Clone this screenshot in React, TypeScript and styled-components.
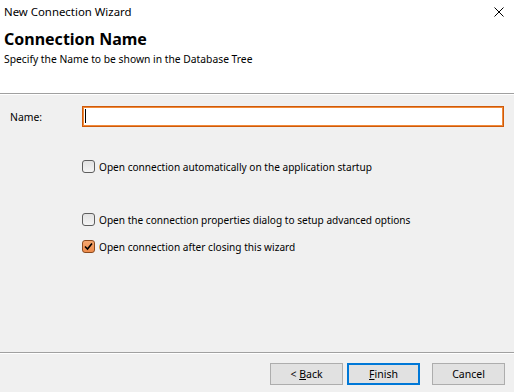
import React from 'react';
import styled, { createGlobalStyle } from 'styled-components';

const GlobalStyle = createGlobalStyle`
  html, body {
    margin: 0;
    padding: 0;
    background: #f0f0f0;
  }
  body {
    font-family: "Segoe UI", "Noto Sans", "Open Sans", sans-serif;
    color: #000;
  }
`;

const Dialog = styled.div`
  width: 514px;
  height: 392px;
  display: flex;
  flex-direction: column;
  background: #f0f0f0;
  overflow: hidden;
`;

const Header = styled.div`
  height: 93px;
  background: #fff;
  display: flex;
  flex-direction: column;
  padding-left: 4px;
  box-sizing: border-box;
`;

const TitleBar = styled.div`
  height: 24px;
  display: flex;
  align-items: center;
  justify-content: space-between;
  padding-right: 10px;
`;

const TitleText = styled.span`
  font-size: 11.4px;
  line-height: 24px;
`;

const CloseIcon = styled.svg`
  width: 10px;
  height: 10px;
  display: block;
`;

const Heading = styled.h1`
  margin: 5px 0 0;
  font-size: 16px;
  font-weight: 700;
  line-height: 20px;
`;

const Subtitle = styled.div`
  margin-top: 3px;
  font-size: 10.3px;
  line-height: 14px;
`;

const Separator = styled.div`
  height: 1px;
  background: #a0a0a0;
  border-bottom: 1px solid #fff;
`;

const Content = styled.div`
  flex: 1;
  display: flex;
  flex-direction: column;
  padding: 11px 10px 0 10px;
`;

const FieldRow = styled.div`
  display: flex;
  align-items: center;
  height: 21px;
`;

const Label = styled.label`
  width: 72px;
  flex-shrink: 0;
  font-size: 10.4px;
`;

const FieldWrap = styled.div`
  position: relative;
  flex: 1;
  height: 21px;
`;

const TextInput = styled.input`
  box-sizing: border-box;
  display: block;
  width: 100%;
  height: 21px;
  margin: 0;
  padding: 0 3px;
  border: 1px solid #cf5a0a;
  box-shadow: inset 0 0 0 1px #f08a3a;
  background: #fff;
  outline: none;
  font: inherit;
  font-size: 11px;
`;

const Caret = styled.span`
  position: absolute;
  left: 3px;
  top: 3px;
  width: 1px;
  height: 14px;
  background: #000;
`;

const Options = styled.div<{ $top: number }>`
  display: flex;
  flex-direction: column;
  gap: 14px;
  margin-top: ${(p) => p.$top}px;
  padding-left: 72px;
`;

const CheckRow = styled.label`
  display: flex;
  align-items: center;
  gap: 4px;
  height: 13px;
  font-size: 10.1px;
  white-space: nowrap;
`;

const Box = styled.span<{ $checked?: boolean }>`
  box-sizing: border-box;
  flex-shrink: 0;
  width: 13px;
  height: 13px;
  border-radius: 3px;
  border: 1px solid ${(p) => (p.$checked ? '#8b4a1e' : '#5e5e5e')};
  background: ${(p) =>
    p.$checked
      ? 'linear-gradient(#f4a66e, #ee8c4c)'
      : 'linear-gradient(#e2e2e2, #f4f4f4)'};
  display: flex;
  align-items: center;
  justify-content: center;
`;

const Footer = styled.div`
  height: 38px;
  display: flex;
  align-items: flex-start;
  justify-content: flex-end;
  padding: 9px 9px 0 0;
  box-sizing: border-box;
`;

const Button = styled.button<{ $default?: boolean; $gap?: number }>`
  box-sizing: border-box;
  width: 73px;
  height: 22px;
  margin-left: ${(p) => p.$gap ?? 0}px;
  padding: 0;
  background: #e1e1e1;
  border: ${(p) => (p.$default ? '2px solid #0078d7' : '1px solid #adadad')};
  font: inherit;
  font-size: 10.5px;
  color: #000;
  u {
    text-decoration: underline;
  }
`;

function Check({ checked }: { checked?: boolean }) {
  return (
    <Box $checked={checked}>
      {checked && (
        <svg width="9" height="9" viewBox="0 0 9 9">
          <path d="M1 4.5 L3.5 7 L8 1.5" fill="none" stroke="#000" strokeWidth="1.6" />
        </svg>
      )}
    </Box>
  );
}

export default function App() {
  return (
    <>
      <GlobalStyle />
      <Dialog>
        <Header>
          <TitleBar>
            <TitleText>New Connection Wizard</TitleText>
            <CloseIcon viewBox="0 0 10 10">
              <path d="M0.5 0.5 L9.5 9.5 M9.5 0.5 L0.5 9.5" stroke="#000" strokeWidth="1" />
            </CloseIcon>
          </TitleBar>
          <Heading>Connection Name</Heading>
          <Subtitle>Specify the Name to be shown in the Database Tree</Subtitle>
        </Header>
        <Separator />
        <Content>
          <FieldRow>
            <Label>Name:</Label>
            <FieldWrap>
              <TextInput defaultValue="" />
              <Caret />
            </FieldWrap>
          </FieldRow>
          <Options $top={33}>
            <CheckRow>
              <Check />
              Open connection automatically on the application startup
            </CheckRow>
          </Options>
          <Options $top={40}>
            <CheckRow>
              <Check />
              Open the connection properties dialog to setup advanced options
            </CheckRow>
            <CheckRow>
              <Check checked />
              Open connection after closing this wizard
            </CheckRow>
          </Options>
        </Content>
        <Separator />
        <Footer>
          <Button>
            &lt; <u>B</u>ack
          </Button>
          <Button $default $gap={4}>
            <u>F</u>inish
          </Button>
          <Button $gap={12}>Cancel</Button>
        </Footer>
      </Dialog>
    </>
  );
}
